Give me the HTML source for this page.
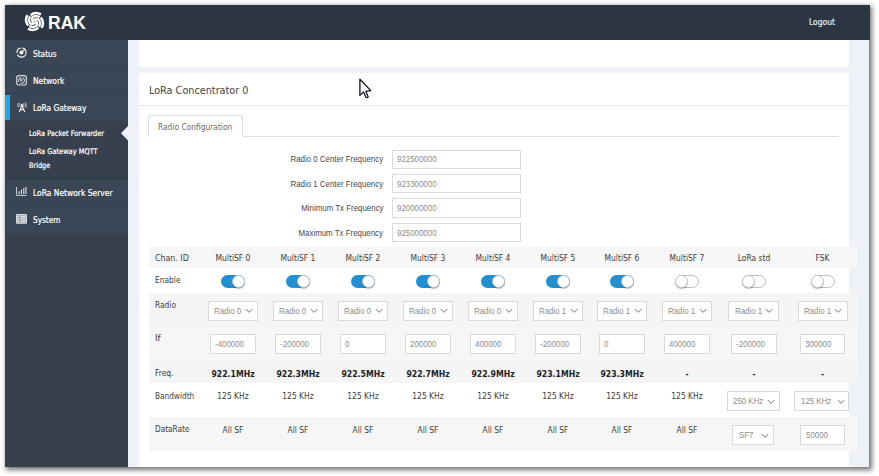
<!DOCTYPE html>
<html lang="en">
<head>
<meta charset="utf-8">
<title>RAK - LoRa Packet Forwarder</title>
<style>
*{box-sizing:border-box;margin:0;padding:0}
html,body{width:879px;height:476px;background:#fff;overflow:hidden}
body{position:relative;font-family:"DejaVu Sans Condensed","Liberation Sans",sans-serif;font-size:9px;color:#333}
#frame{position:absolute;left:5px;top:5px;width:864.2px;height:462px;background:#eef2f8;box-shadow:2px 2px 5px 1px rgba(0,0,0,.55)}
#clip{position:absolute;left:0;top:0;width:865px;height:462px;overflow:hidden}
#pg{position:absolute;left:-5px;top:-5px;width:879px;height:476px}
#pg div,#pg svg{position:absolute}
.tt{font-family:"DejaVu Sans Condensed","Liberation Sans",sans-serif;white-space:nowrap}
.w{-webkit-text-stroke:.2px currentColor}
.ta{font-family:"Liberation Sans",sans-serif;white-space:nowrap}
.hdr{left:5px;top:5px;width:865px;height:35px;background:#2b3543}
.side{left:5px;top:40px;width:123px;height:430px;background:#353f4d}
.mi{left:5px;width:123px;height:27px;background:#3a4555;border-bottom:1px solid #36404e}
.card{background:#fff;left:138.6px;width:710.6px}
.box{border:1px solid #d9d9d9;background:#fff}
.row{left:149px;width:708.5px}
.tg{width:24px;height:13.3px;border-radius:7px}
.tg.on{background:#2190d3}
.tg.off{background:#fff;border:1px solid #bdbdbd}
.tg i{position:absolute;top:0;right:0;width:13.3px;height:13.3px;border-radius:50%;background:#fff;border:1px solid #c4c4c4;box-shadow:0 1px 1px rgba(0,0,0,.25)}
.tg.off i{left:-1px;right:auto;top:-1px}
.chev{width:8.2px;height:5.4px;margin:-.3px 0 0 -.4px;fill:none;stroke:#6a6a6a;stroke-width:1.15}
</style>
</head>
<body>
<div id="frame"><div id="clip"><div id="pg">
<header>
<div class="hdr"></div>
<svg style="left:23.7px;top:11.4px;width:21px;height:21px" viewBox="0 0 20 20" fill="none" stroke="#fff"><g transform="rotate(0 10 10)"><path d="M8.84 9.35 A3.3 3.3 0 0 1 13.25 8.09" stroke-width="2.1"/><path d="M7.17 6.92 A6.1 6.1 0 0 1 14.93 5.83" stroke-width="2.3"/><path d="M6.22 3.99 A8.9 8.9 0 0 1 16.15 3.29" stroke-width="2.4"/></g><g transform="rotate(90 10 10)"><path d="M8.84 9.35 A3.3 3.3 0 0 1 13.25 8.09" stroke-width="2.1"/><path d="M7.17 6.92 A6.1 6.1 0 0 1 14.93 5.83" stroke-width="2.3"/><path d="M6.22 3.99 A8.9 8.9 0 0 1 16.15 3.29" stroke-width="2.4"/></g><g transform="rotate(180 10 10)"><path d="M8.84 9.35 A3.3 3.3 0 0 1 13.25 8.09" stroke-width="2.1"/><path d="M7.17 6.92 A6.1 6.1 0 0 1 14.93 5.83" stroke-width="2.3"/><path d="M6.22 3.99 A8.9 8.9 0 0 1 16.15 3.29" stroke-width="2.4"/></g><g transform="rotate(270 10 10)"><path d="M8.84 9.35 A3.3 3.3 0 0 1 13.25 8.09" stroke-width="2.1"/><path d="M7.17 6.92 A6.1 6.1 0 0 1 14.93 5.83" stroke-width="2.3"/><path d="M6.22 3.99 A8.9 8.9 0 0 1 16.15 3.29" stroke-width="2.4"/></g></svg>
<div class="ta" style="left:47.7px;top:9.5px;font-size:18.4px;line-height:25.8px;color:#fff;transform:scaleX(0.954);transform-origin:0 50%;font-weight:bold;">RAK</div>
<div class="tt w" style="left:809.0px;top:16.0px;font-size:9.0px;line-height:12.6px;color:#e6e8ec;transform:scaleX(0.939);transform-origin:0 50%;">Logout</div>
</header>
<nav>
<div class="side"></div>
<div class="mi" style="top:40px"></div>
<div class="mi" style="top:67px"></div>
<div class="mi" style="top:94px;border-bottom:none;height:26.5px"></div>
<div style="left:5px;top:95px;width:5px;height:25px;background:#22a7ee"></div>
<div class="mi" style="top:179.5px"></div>
<div class="mi" style="top:206.5px"></div>
<svg style="left:120px;top:126px;width:8px;height:14.6px" viewBox="0 0 8 15" preserveAspectRatio="none"><path d="M8 0 L1 7.5 L8 15 Z" fill="#eef2f8"/></svg>
<svg style="left:16px;top:47px;width:11px;height:11px" viewBox="0 0 11 11"><circle cx="5.5" cy="5.5" r="4.6" fill="none" stroke="#f2f3f5" stroke-width="1.1" stroke-dasharray="12 1.6 7 1.2 6.5 1"/><circle cx="5.4" cy="5.5" r="2" fill="#fff"/><path d="M6.5 4.4 L9.3 1.8" stroke="#f2f3f5" stroke-width="1.1" fill="none"/></svg>
<svg style="left:16px;top:74.5px;width:11px;height:11px" viewBox="0 0 11 11"><rect x=".7" y=".7" width="9.6" height="9.3" rx="2.2" fill="none" stroke="#d5d8dd" stroke-width="1.2"/><circle cx="5.5" cy="5.4" r="3" fill="none" stroke="#e4e6ea" stroke-width="1" stroke-dasharray="6 1.5"/><circle cx="5.3" cy="4.9" r="1.1" fill="none" stroke="#fff" stroke-width=".8"/></svg>
<svg style="left:16.5px;top:101.5px;width:10px;height:11px" viewBox="0 0 10 11"><path d="M2.2 10 L5 3.6 L7.8 10 M3.3 7.6 H6.7" fill="none" stroke="#f2f3f5" stroke-width="1.1"/><path d="M3.4 1.2 Q2.5 3 3.4 4.8 M6.6 1.2 Q7.5 3 6.6 4.8" fill="none" stroke="#e4e6ea" stroke-width=".8"/><path d="M1.5 .5 Q0 3 1.5 5.5 M8.5 .5 Q10 3 8.5 5.5" fill="none" stroke="#e4e6ea" stroke-width=".9"/><circle cx="5" cy="3" r=".9" fill="#fff"/></svg>
<svg style="left:16px;top:187px;width:11px;height:9px" viewBox="0 0 11 9"><path d="M.6 0 V8.4 H10.6" fill="none" stroke="#cfd3d9" stroke-width="1"/><path d="M3.2 7 V4.2 M5.5 7 V2.6 M7.8 7 V1 M10 7 V0" fill="none" stroke="#dfe2e6" stroke-width="1.1"/></svg>
<svg style="left:16px;top:213.8px;width:11px;height:9.8px" viewBox="0 0 11 9" preserveAspectRatio="none"><rect x=".5" y=".5" width="10" height="8" rx=".8" fill="#aab0b9" stroke="#d9dce1" stroke-width="1"/><path d="M1.5 2.6 H9.5 M1.5 4.6 H9.5 M1.5 6.6 H9.5" stroke="#e9ebee" stroke-width="1" stroke-dasharray="1.4 .7 6 0"/><path d="M4 1 V8" stroke="#7d8590" stroke-width=".6"/></svg>
<div class="tt w" style="left:32.5px;top:47.9px;font-size:8.8px;line-height:12.3px;color:#fff;transform:scaleX(0.936);transform-origin:0 50%;">Status</div>
<div class="tt w" style="left:32.5px;top:74.8px;font-size:8.8px;line-height:12.3px;color:#fff;transform:scaleX(0.950);transform-origin:0 50%;">Network</div>
<div class="tt w" style="left:32.5px;top:102.2px;font-size:8.8px;line-height:12.3px;color:#fff;transform:scaleX(0.940);transform-origin:0 50%;">LoRa Gateway</div>
<div class="tt w" style="left:28.5px;top:128.8px;font-size:7.7px;line-height:10.8px;color:#fff;transform:scaleX(0.954);transform-origin:0 50%;">LoRa Packet Forwarder</div>
<div class="tt w" style="left:28.5px;top:147.3px;font-size:7.7px;line-height:10.8px;color:#fff;transform:scaleX(0.960);transform-origin:0 50%;">LoRa Gateway MQTT</div>
<div class="tt w" style="left:28.5px;top:160.9px;font-size:7.7px;line-height:10.8px;color:#fff;transform:scaleX(0.940);transform-origin:0 50%;">Bridge</div>
<div class="tt w" style="left:32.5px;top:187.2px;font-size:8.8px;line-height:12.3px;color:#fff;transform:scaleX(0.955);transform-origin:0 50%;">LoRa Network Server</div>
<div class="tt w" style="left:32.5px;top:214.2px;font-size:8.8px;line-height:12.3px;color:#fff;transform:scaleX(0.925);transform-origin:0 50%;">System</div>
</nav>
<main>
<div class="card" style="top:40px;height:27px"></div>
<div class="card" style="top:73.2px;height:400px"></div>
<div style="left:138px;top:105px;width:711px;height:1px;background:#e9e9e9"></div>
<div style="left:149px;top:136px;width:690px;height:1px;background:#ddd"></div>
<div style="left:148.3px;top:115.2px;width:94.5px;height:21.8px;border:1px solid #ddd;border-bottom:1px solid #fff;border-radius:3px 3px 0 0;background:#fff"></div>
<div class="tt" style="left:148.8px;top:82.5px;font-size:10.9px;line-height:15.3px;color:#444;transform:scaleX(0.988);transform-origin:0 50%;">LoRa Concentrator 0</div>
<div class="tt" style="left:158.2px;top:121.7px;font-size:8.2px;line-height:11.5px;color:#6a6a6a;transform:scaleX(1.018);transform-origin:0 50%;">Radio Configuration</div>
<div class="box" style="left:391.5px;top:149.7px;width:129.2px;height:19.3px"></div>
<div class="ta" style="left:279.2px;top:153.3px;font-size:8.9px;line-height:12.5px;color:#484848;transform:scaleX(0.890);transform-origin:100% 50%;">Radio 0 Center Frequency</div>
<div class="ta" style="left:396.6px;top:153.3px;font-size:8.9px;line-height:12.5px;color:#8c8c8c;transform:scaleX(0.890);transform-origin:0 50%;">922500000</div>
<div class="box" style="left:391.5px;top:174.1px;width:129.2px;height:19.3px"></div>
<div class="ta" style="left:279.2px;top:177.8px;font-size:8.9px;line-height:12.5px;color:#484848;transform:scaleX(0.890);transform-origin:100% 50%;">Radio 1 Center Frequency</div>
<div class="ta" style="left:396.6px;top:177.8px;font-size:8.9px;line-height:12.5px;color:#8c8c8c;transform:scaleX(0.890);transform-origin:0 50%;">923300000</div>
<div class="box" style="left:391.5px;top:198.4px;width:129.2px;height:19.3px"></div>
<div class="ta" style="left:290.6px;top:202.1px;font-size:8.9px;line-height:12.5px;color:#484848;transform:scaleX(0.890);transform-origin:100% 50%;">Minimum Tx Frequency</div>
<div class="ta" style="left:396.6px;top:202.1px;font-size:8.9px;line-height:12.5px;color:#8c8c8c;transform:scaleX(0.890);transform-origin:0 50%;">920000000</div>
<div class="box" style="left:391.5px;top:223.0px;width:129.2px;height:19.3px"></div>
<div class="ta" style="left:288.1px;top:226.7px;font-size:8.9px;line-height:12.5px;color:#484848;transform:scaleX(0.890);transform-origin:100% 50%;">Maximum Tx Frequency</div>
<div class="ta" style="left:396.6px;top:226.7px;font-size:8.9px;line-height:12.5px;color:#8c8c8c;transform:scaleX(0.890);transform-origin:0 50%;">925000000</div>
<div class="row" style="top:246.6px;height:21.8px;background:#f6f6f6"></div>
<div class="row" style="top:293.2px;height:34.8px;background:#f5f5f5"></div>
<div class="row" style="top:327.5px;height:34.5px;background:#f6f6f6"></div>
<div class="row" style="top:361.4px;height:22.1px;background:#f5f5f5"></div>
<div class="row" style="top:417.2px;height:33.4px;background:#f6f6f6"></div>
<div class="tt" style="left:154.5px;top:252.9px;font-size:8.4px;line-height:11.8px;color:#3c3c3c;transform:scaleX(1.045);transform-origin:0 50%;">Chan. ID</div>
<div class="tt" style="left:154.5px;top:274.7px;font-size:8.4px;line-height:11.8px;color:#3c3c3c;transform:scaleX(0.993);transform-origin:0 50%;">Enable</div>
<div class="tt" style="left:154.5px;top:299.5px;font-size:8.4px;line-height:11.8px;color:#3c3c3c;transform:scaleX(0.993);transform-origin:0 50%;">Radio</div>
<div class="tt" style="left:154.5px;top:333.0px;font-size:8.4px;line-height:11.8px;color:#3c3c3c;transform:scaleX(1.150);transform-origin:0 50%;">If</div>
<div class="tt" style="left:154.5px;top:368.1px;font-size:8.4px;line-height:11.8px;color:#3c3c3c;transform:scaleX(1.003);transform-origin:0 50%;">Freq.</div>
<div class="tt" style="left:154.5px;top:390.5px;font-size:8.4px;line-height:11.8px;color:#3c3c3c;transform:scaleX(0.977);transform-origin:0 50%;">Bandwidth</div>
<div class="tt" style="left:154.5px;top:423.9px;font-size:8.4px;line-height:11.8px;color:#3c3c3c;transform:scaleX(0.976);transform-origin:0 50%;">DataRate</div>
<div class="tt" style="left:215.6px;top:252.9px;font-size:8.4px;line-height:11.8px;color:#3c3c3c;transform:scaleX(1.000);transform-origin:50% 50%;">MultiSF 0</div>
<div class="tg on" style="left:221px;top:275px"><i></i></div>
<div class="box" style="left:208.2px;top:301px;width:49.6px;height:20px"></div>
<div class="ta" style="left:214.4px;top:304.9px;font-size:8.9px;line-height:12.5px;color:#8c8c8c;transform:scaleX(0.890);transform-origin:0 50%;">Radio 0</div>
<svg class="chev" viewBox="0 0 10 6" style="left:245.2px;top:308.4px"><path d="M1 1 L5 5 L9 1"/></svg>
<div class="box" style="left:210.2px;top:334px;width:45.6px;height:20px"></div>
<div class="ta" style="left:215.0px;top:338.1px;font-size:8.9px;line-height:12.5px;color:#8c8c8c;transform:scaleX(0.890);transform-origin:0 50%;">-400000</div>
<div class="tt" style="left:212.9px;top:368.7px;font-size:8.0px;line-height:11.2px;color:#222;transform:scaleX(1.079);transform-origin:50% 50%;font-weight:bold;">922.1MHz</div>
<div class="tt" style="left:217.3px;top:390.7px;font-size:8.4px;line-height:11.8px;color:#3c3c3c;transform:scaleX(1.000);transform-origin:50% 50%;">125 KHz</div>
<div class="tt" style="left:222.6px;top:424.8px;font-size:8.4px;line-height:11.8px;color:#3c3c3c;transform:scaleX(1.000);transform-origin:50% 50%;">All SF</div>
<div class="tt" style="left:280.6px;top:252.9px;font-size:8.4px;line-height:11.8px;color:#3c3c3c;transform:scaleX(1.000);transform-origin:50% 50%;">MultiSF 1</div>
<div class="tg on" style="left:286px;top:275px"><i></i></div>
<div class="box" style="left:273.2px;top:301px;width:49.6px;height:20px"></div>
<div class="ta" style="left:279.4px;top:304.9px;font-size:8.9px;line-height:12.5px;color:#8c8c8c;transform:scaleX(0.890);transform-origin:0 50%;">Radio 0</div>
<svg class="chev" viewBox="0 0 10 6" style="left:310.2px;top:308.4px"><path d="M1 1 L5 5 L9 1"/></svg>
<div class="box" style="left:275.2px;top:334px;width:45.6px;height:20px"></div>
<div class="ta" style="left:280.0px;top:338.1px;font-size:8.9px;line-height:12.5px;color:#8c8c8c;transform:scaleX(0.890);transform-origin:0 50%;">-200000</div>
<div class="tt" style="left:277.9px;top:368.7px;font-size:8.0px;line-height:11.2px;color:#222;transform:scaleX(1.079);transform-origin:50% 50%;font-weight:bold;">922.3MHz</div>
<div class="tt" style="left:282.3px;top:390.7px;font-size:8.4px;line-height:11.8px;color:#3c3c3c;transform:scaleX(1.000);transform-origin:50% 50%;">125 KHz</div>
<div class="tt" style="left:287.6px;top:424.8px;font-size:8.4px;line-height:11.8px;color:#3c3c3c;transform:scaleX(1.000);transform-origin:50% 50%;">All SF</div>
<div class="tt" style="left:345.6px;top:252.9px;font-size:8.4px;line-height:11.8px;color:#3c3c3c;transform:scaleX(1.000);transform-origin:50% 50%;">MultiSF 2</div>
<div class="tg on" style="left:351px;top:275px"><i></i></div>
<div class="box" style="left:338.2px;top:301px;width:49.6px;height:20px"></div>
<div class="ta" style="left:344.4px;top:304.9px;font-size:8.9px;line-height:12.5px;color:#8c8c8c;transform:scaleX(0.890);transform-origin:0 50%;">Radio 0</div>
<svg class="chev" viewBox="0 0 10 6" style="left:375.2px;top:308.4px"><path d="M1 1 L5 5 L9 1"/></svg>
<div class="box" style="left:340.2px;top:334px;width:45.6px;height:20px"></div>
<div class="ta" style="left:345.0px;top:338.1px;font-size:8.9px;line-height:12.5px;color:#8c8c8c;transform:scaleX(0.890);transform-origin:0 50%;">0</div>
<div class="tt" style="left:342.9px;top:368.7px;font-size:8.0px;line-height:11.2px;color:#222;transform:scaleX(1.079);transform-origin:50% 50%;font-weight:bold;">922.5MHz</div>
<div class="tt" style="left:347.3px;top:390.7px;font-size:8.4px;line-height:11.8px;color:#3c3c3c;transform:scaleX(1.000);transform-origin:50% 50%;">125 KHz</div>
<div class="tt" style="left:352.6px;top:424.8px;font-size:8.4px;line-height:11.8px;color:#3c3c3c;transform:scaleX(1.000);transform-origin:50% 50%;">All SF</div>
<div class="tt" style="left:410.6px;top:252.9px;font-size:8.4px;line-height:11.8px;color:#3c3c3c;transform:scaleX(1.000);transform-origin:50% 50%;">MultiSF 3</div>
<div class="tg on" style="left:416px;top:275px"><i></i></div>
<div class="box" style="left:403.2px;top:301px;width:49.6px;height:20px"></div>
<div class="ta" style="left:409.4px;top:304.9px;font-size:8.9px;line-height:12.5px;color:#8c8c8c;transform:scaleX(0.890);transform-origin:0 50%;">Radio 0</div>
<svg class="chev" viewBox="0 0 10 6" style="left:440.2px;top:308.4px"><path d="M1 1 L5 5 L9 1"/></svg>
<div class="box" style="left:405.2px;top:334px;width:45.6px;height:20px"></div>
<div class="ta" style="left:410.0px;top:338.1px;font-size:8.9px;line-height:12.5px;color:#8c8c8c;transform:scaleX(0.890);transform-origin:0 50%;">200000</div>
<div class="tt" style="left:407.9px;top:368.7px;font-size:8.0px;line-height:11.2px;color:#222;transform:scaleX(1.079);transform-origin:50% 50%;font-weight:bold;">922.7MHz</div>
<div class="tt" style="left:412.3px;top:390.7px;font-size:8.4px;line-height:11.8px;color:#3c3c3c;transform:scaleX(1.000);transform-origin:50% 50%;">125 KHz</div>
<div class="tt" style="left:417.6px;top:424.8px;font-size:8.4px;line-height:11.8px;color:#3c3c3c;transform:scaleX(1.000);transform-origin:50% 50%;">All SF</div>
<div class="tt" style="left:475.6px;top:252.9px;font-size:8.4px;line-height:11.8px;color:#3c3c3c;transform:scaleX(1.000);transform-origin:50% 50%;">MultiSF 4</div>
<div class="tg on" style="left:481px;top:275px"><i></i></div>
<div class="box" style="left:468.2px;top:301px;width:49.6px;height:20px"></div>
<div class="ta" style="left:474.4px;top:304.9px;font-size:8.9px;line-height:12.5px;color:#8c8c8c;transform:scaleX(0.890);transform-origin:0 50%;">Radio 0</div>
<svg class="chev" viewBox="0 0 10 6" style="left:505.2px;top:308.4px"><path d="M1 1 L5 5 L9 1"/></svg>
<div class="box" style="left:470.2px;top:334px;width:45.6px;height:20px"></div>
<div class="ta" style="left:475.0px;top:338.1px;font-size:8.9px;line-height:12.5px;color:#8c8c8c;transform:scaleX(0.890);transform-origin:0 50%;">400000</div>
<div class="tt" style="left:472.9px;top:368.7px;font-size:8.0px;line-height:11.2px;color:#222;transform:scaleX(1.079);transform-origin:50% 50%;font-weight:bold;">922.9MHz</div>
<div class="tt" style="left:477.3px;top:390.7px;font-size:8.4px;line-height:11.8px;color:#3c3c3c;transform:scaleX(1.000);transform-origin:50% 50%;">125 KHz</div>
<div class="tt" style="left:482.6px;top:424.8px;font-size:8.4px;line-height:11.8px;color:#3c3c3c;transform:scaleX(1.000);transform-origin:50% 50%;">All SF</div>
<div class="tt" style="left:540.6px;top:252.9px;font-size:8.4px;line-height:11.8px;color:#3c3c3c;transform:scaleX(1.000);transform-origin:50% 50%;">MultiSF 5</div>
<div class="tg on" style="left:546px;top:275px"><i></i></div>
<div class="box" style="left:533.2px;top:301px;width:49.6px;height:20px"></div>
<div class="ta" style="left:539.4px;top:304.9px;font-size:8.9px;line-height:12.5px;color:#8c8c8c;transform:scaleX(0.890);transform-origin:0 50%;">Radio 1</div>
<svg class="chev" viewBox="0 0 10 6" style="left:570.2px;top:308.4px"><path d="M1 1 L5 5 L9 1"/></svg>
<div class="box" style="left:535.2px;top:334px;width:45.6px;height:20px"></div>
<div class="ta" style="left:540.0px;top:338.1px;font-size:8.9px;line-height:12.5px;color:#8c8c8c;transform:scaleX(0.890);transform-origin:0 50%;">-200000</div>
<div class="tt" style="left:537.9px;top:368.7px;font-size:8.0px;line-height:11.2px;color:#222;transform:scaleX(1.079);transform-origin:50% 50%;font-weight:bold;">923.1MHz</div>
<div class="tt" style="left:542.3px;top:390.7px;font-size:8.4px;line-height:11.8px;color:#3c3c3c;transform:scaleX(1.000);transform-origin:50% 50%;">125 KHz</div>
<div class="tt" style="left:547.6px;top:424.8px;font-size:8.4px;line-height:11.8px;color:#3c3c3c;transform:scaleX(1.000);transform-origin:50% 50%;">All SF</div>
<div class="tt" style="left:604.6px;top:252.9px;font-size:8.4px;line-height:11.8px;color:#3c3c3c;transform:scaleX(1.000);transform-origin:50% 50%;">MultiSF 6</div>
<div class="tg on" style="left:610px;top:275px"><i></i></div>
<div class="box" style="left:597.2px;top:301px;width:49.6px;height:20px"></div>
<div class="ta" style="left:603.4px;top:304.9px;font-size:8.9px;line-height:12.5px;color:#8c8c8c;transform:scaleX(0.890);transform-origin:0 50%;">Radio 1</div>
<svg class="chev" viewBox="0 0 10 6" style="left:634.2px;top:308.4px"><path d="M1 1 L5 5 L9 1"/></svg>
<div class="box" style="left:599.2px;top:334px;width:45.6px;height:20px"></div>
<div class="ta" style="left:604.0px;top:338.1px;font-size:8.9px;line-height:12.5px;color:#8c8c8c;transform:scaleX(0.890);transform-origin:0 50%;">0</div>
<div class="tt" style="left:601.9px;top:368.7px;font-size:8.0px;line-height:11.2px;color:#222;transform:scaleX(1.079);transform-origin:50% 50%;font-weight:bold;">923.3MHz</div>
<div class="tt" style="left:606.3px;top:390.7px;font-size:8.4px;line-height:11.8px;color:#3c3c3c;transform:scaleX(1.000);transform-origin:50% 50%;">125 KHz</div>
<div class="tt" style="left:611.6px;top:424.8px;font-size:8.4px;line-height:11.8px;color:#3c3c3c;transform:scaleX(1.000);transform-origin:50% 50%;">All SF</div>
<div class="tt" style="left:669.6px;top:252.9px;font-size:8.4px;line-height:11.8px;color:#3c3c3c;transform:scaleX(1.000);transform-origin:50% 50%;">MultiSF 7</div>
<div class="tg off" style="left:675px;top:275px"><i></i></div>
<div class="box" style="left:662.2px;top:301px;width:49.6px;height:20px"></div>
<div class="ta" style="left:668.4px;top:304.9px;font-size:8.9px;line-height:12.5px;color:#8c8c8c;transform:scaleX(0.890);transform-origin:0 50%;">Radio 1</div>
<svg class="chev" viewBox="0 0 10 6" style="left:699.2px;top:308.4px"><path d="M1 1 L5 5 L9 1"/></svg>
<div class="box" style="left:664.2px;top:334px;width:45.6px;height:20px"></div>
<div class="ta" style="left:669.0px;top:338.1px;font-size:8.9px;line-height:12.5px;color:#8c8c8c;transform:scaleX(0.890);transform-origin:0 50%;">400000</div>
<div class="tt" style="left:685.5px;top:368.7px;font-size:8.0px;line-height:11.2px;color:#222;transform:scaleX(1.000);transform-origin:50% 50%;font-weight:bold;">-</div>
<div class="tt" style="left:671.3px;top:390.7px;font-size:8.4px;line-height:11.8px;color:#3c3c3c;transform:scaleX(1.000);transform-origin:50% 50%;">125 KHz</div>
<div class="tt" style="left:676.6px;top:424.8px;font-size:8.4px;line-height:11.8px;color:#3c3c3c;transform:scaleX(1.000);transform-origin:50% 50%;">All SF</div>
<div class="tt" style="left:737.8px;top:252.9px;font-size:8.4px;line-height:11.8px;color:#3c3c3c;transform:scaleX(1.000);transform-origin:50% 50%;">LoRa std</div>
<div class="tg off" style="left:742px;top:275px"><i></i></div>
<div class="box" style="left:728.3px;top:301px;width:50.4px;height:20px"></div>
<div class="ta" style="left:734.5px;top:304.9px;font-size:8.9px;line-height:12.5px;color:#8c8c8c;transform:scaleX(0.890);transform-origin:0 50%;">Radio 1</div>
<svg class="chev" viewBox="0 0 10 6" style="left:765.3px;top:308.4px"><path d="M1 1 L5 5 L9 1"/></svg>
<div class="box" style="left:731.2px;top:334px;width:45.6px;height:20px"></div>
<div class="ta" style="left:736.0px;top:338.1px;font-size:8.9px;line-height:12.5px;color:#8c8c8c;transform:scaleX(0.890);transform-origin:0 50%;">-200000</div>
<div class="tt" style="left:752.5px;top:368.7px;font-size:8.0px;line-height:11.2px;color:#222;transform:scaleX(1.000);transform-origin:50% 50%;font-weight:bold;">-</div>
<div class="tt" style="left:815.5px;top:252.9px;font-size:8.4px;line-height:11.8px;color:#3c3c3c;transform:scaleX(1.000);transform-origin:50% 50%;">FSK</div>
<div class="tg off" style="left:810.5px;top:275px"><i></i></div>
<div class="box" style="left:797.5px;top:301px;width:50.2px;height:20px"></div>
<div class="ta" style="left:803.7px;top:304.9px;font-size:8.9px;line-height:12.5px;color:#8c8c8c;transform:scaleX(0.890);transform-origin:0 50%;">Radio 1</div>
<svg class="chev" viewBox="0 0 10 6" style="left:834.5px;top:308.4px"><path d="M1 1 L5 5 L9 1"/></svg>
<div class="box" style="left:799.7px;top:334px;width:45.6px;height:20px"></div>
<div class="ta" style="left:804.5px;top:338.1px;font-size:8.9px;line-height:12.5px;color:#8c8c8c;transform:scaleX(0.890);transform-origin:0 50%;">300000</div>
<div class="tt" style="left:821.0px;top:368.7px;font-size:8.0px;line-height:11.2px;color:#222;transform:scaleX(1.000);transform-origin:50% 50%;font-weight:bold;">-</div>
<div class="box" style="left:726.8px;top:391px;width:52.8px;height:20px"></div>
<div class="ta" style="left:733.0px;top:394.8px;font-size:8.9px;line-height:12.5px;color:#8c8c8c;transform:scaleX(0.890);transform-origin:0 50%;">250 KHz</div>
<svg class="chev" viewBox="0 0 10 6" style="left:767px;top:399px"><path d="M1 1 L5 5 L9 1"/></svg>
<div class="box" style="left:794.4px;top:391px;width:55.1px;height:20px"></div>
<div class="ta" style="left:801.0px;top:394.8px;font-size:8.9px;line-height:12.5px;color:#8c8c8c;transform:scaleX(0.890);transform-origin:0 50%;">125 KHz</div>
<svg class="chev" viewBox="0 0 10 6" style="left:837px;top:399px"><path d="M1 1 L5 5 L9 1"/></svg>
<div class="box" style="left:732.4px;top:425px;width:41.6px;height:20px"></div>
<div class="ta" style="left:739.0px;top:428.8px;font-size:8.9px;line-height:12.5px;color:#8c8c8c;transform:scaleX(0.890);transform-origin:0 50%;">SF7</div>
<svg class="chev" viewBox="0 0 10 6" style="left:761px;top:432.8px"><path d="M1 1 L5 5 L9 1"/></svg>
<div class="box" style="left:800.2px;top:425px;width:44.5px;height:20px"></div>
<div class="ta" style="left:805.5px;top:428.8px;font-size:8.9px;line-height:12.5px;color:#8c8c8c;transform:scaleX(0.890);transform-origin:0 50%;">50000</div>
</main>
<svg style="left:358.6px;top:78px;width:14px;height:21px" viewBox="0 0 14 21"><path d="M.9 1.2 V17.4 L4.5 13.9 L6.9 19.3 Q7.9 20.1 9.2 19 L6.9 13.4 L11.8 12.6 Z" fill="#fff" stroke="#15151f" stroke-width="1.3" stroke-linejoin="round"/></svg>
</div></div></div>
</body>
</html>
